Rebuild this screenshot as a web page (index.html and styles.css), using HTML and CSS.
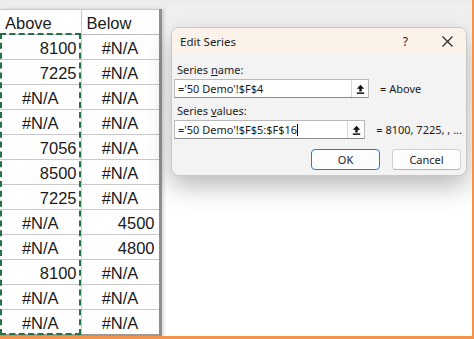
FILE: index.html
```html
<!DOCTYPE html>
<html lang="en">
<head>
  <meta charset="UTF-8" />
  <title>Edit Series</title>
  <link rel="stylesheet" href="styles.css">
</head>
<body>
  <div class="frame">
    <table class="sheet">
      <thead>
        <tr><th>Above</th><th>Below</th></tr>
      </thead>
      <tbody>
        <tr><td class="num">8100</td><td class="err">#N/A</td></tr>
        <tr><td class="num">7225</td><td class="err">#N/A</td></tr>
        <tr><td class="err">#N/A</td><td class="err">#N/A</td></tr>
        <tr><td class="err">#N/A</td><td class="err">#N/A</td></tr>
        <tr><td class="num">7056</td><td class="err">#N/A</td></tr>
        <tr><td class="num">8500</td><td class="err">#N/A</td></tr>
        <tr><td class="num">7225</td><td class="err">#N/A</td></tr>
        <tr><td class="err">#N/A</td><td class="num">4500</td></tr>
        <tr><td class="err">#N/A</td><td class="num">4800</td></tr>
        <tr><td class="num">8100</td><td class="err">#N/A</td></tr>
        <tr><td class="err">#N/A</td><td class="err">#N/A</td></tr>
        <tr><td class="err">#N/A</td><td class="err">#N/A</td></tr>
      </tbody>
    </table>
    <div class="selection"></div>

    <section class="dialog">
      <div class="title-bar">
        <span class="title">Edit Series</span>
        <span class="help">?</span>
        <span class="close">
          <svg width="11" height="11" viewBox="0 0 11 11"><path d="M0.5 0.5 L10.5 10.5 M10.5 0.5 L0.5 10.5" stroke="#222" stroke-width="1.1" fill="none"/></svg>
        </span>
      </div>
      <div class="dialog-body">
        <label class="field-label">Series <u>n</u>ame:</label>
        <div class="field-row">
          <div class="ref-box">
            <span class="ref-text">='50 Demo'!$F$4</span>
            <span class="ref-btn">
              <svg width="9" height="10" viewBox="0 0 9 10"><path d="M4.5 0.8 L8.2 4.8 H5.7 V7.4 H3.3 V4.8 H0.8 Z" fill="#111"/><rect x="0.8" y="8.4" width="7.4" height="1.5" fill="#111"/></svg>
            </span>
          </div>
          <span class="preview">= Above</span>
        </div>
        <label class="field-label second">Series <u>v</u>alues:</label>
        <div class="field-row">
          <div class="ref-box">
            <span class="ref-text">='50 Demo'!$F$5:$F$16<span class="caret"></span></span>
            <span class="ref-btn">
              <svg width="9" height="10" viewBox="0 0 9 10"><path d="M4.5 0.8 L8.2 4.8 H5.7 V7.4 H3.3 V4.8 H0.8 Z" fill="#111"/><rect x="0.8" y="8.4" width="7.4" height="1.5" fill="#111"/></svg>
            </span>
          </div>
          <span class="preview">= 8100, 7225, , ...</span>
        </div>
        <div class="buttons">
          <button class="btn default">OK</button>
          <button class="btn">Cancel</button>
        </div>
      </div>
    </section>
  </div>
</body>
</html>
```

FILE: styles.css
```css
body {
  margin: 0;
  padding: 0;
  background: #fff;
}

.frame {
  position: relative;
  width: 472px;
  height: 336px;
  border-right: 2px solid #f4914a;
  border-bottom: 3px solid #f4914a;
  background: linear-gradient(to bottom, #ececec 0px, #f6f6f6 40px, #fff 210px);
  overflow: hidden;
}

.sheet {
  margin-top: 9px;
  border-collapse: collapse;
  background: #fff;
  font-family: "Liberation Sans", Arial, sans-serif;
  font-size: 16.5px;
  color: #1a1a1a;
  border-top: 1px solid #9a9a9a;
  border-right: 3px solid #8f8f8f;
  border-bottom: 2px solid #9a9a9a;
  box-shadow: 2px 0 3px rgba(0, 0, 0, 0.15);
}

.sheet th,
.sheet td {
  box-sizing: border-box;
  border: 1px solid #c9c9c9;
  padding: 2px 4px 0;
  height: 25px;
  line-height: 22px;
}

.sheet th {
  height: 24px;
  padding-left: 5px;
  font-weight: normal;
  text-align: left;
  border-bottom-color: #bdbdbd;
}

.sheet th:first-child,
.sheet td:first-child {
  width: 81px;
  border-left: none;
}

.sheet th:last-child,
.sheet td:last-child {
  width: 79px;
}

.sheet .num {
  text-align: right;
}

.sheet .err {
  text-align: center;
}

.selection {
  position: absolute;
  left: 0;
  top: 33px;
  width: 77px;
  height: 298px;
  border: 2px dashed #217346;
}

.dialog {
  position: absolute;
  left: 171px;
  top: 27px;
  width: 294px;
  height: 147px;
  border: 1px solid #c8c8c8;
  border-radius: 8px;
  background: #f3f3f3;
  box-shadow: 0 10px 26px rgba(0, 0, 0, 0.28);
  overflow: hidden;
  font-family: "Noto Sans", "Open Sans", sans-serif;
  font-size: 11px;
  color: #1b1b1b;
}

.title-bar {
  height: 26px;
  display: flex;
  align-items: center;
  padding: 0 13px 0 8px;
  background: #fbf3ea;
}

.title {
  flex: 1;
  font-size: 11.5px;
}

.help {
  margin-right: 34px;
  font-size: 12px;
}

.close {
  display: flex;
}

.dialog-body {
  padding: 6px 4px 0 2px;
}

.field-label {
  display: block;
  height: 19px;
  line-height: 19px;
  padding-left: 3px;
}

.field-label.second {
  margin-top: 3px;
}

.field-row {
  display: flex;
  align-items: center;
  gap: 11px;
}

.ref-box {
  box-sizing: border-box;
  width: 195px;
  height: 19px;
  display: flex;
  align-items: center;
  background: #fff;
  border: 1px solid #b9b9b9;
  border-bottom-color: #8a8a8a;
}

.ref-text {
  flex: 1;
  padding-left: 3px;
  font-size: 11px;
  white-space: nowrap;
}

.caret {
  display: inline-block;
  width: 1px;
  height: 12px;
  background: #000;
  vertical-align: -2px;
}

.ref-btn {
  box-sizing: border-box;
  width: 17px;
  height: 17px;
  display: flex;
  align-items: center;
  justify-content: center;
  border-left: 1px solid #d6d6d6;
  background: #fdfdfd;
}

.preview {
  white-space: nowrap;
}

.buttons {
  display: flex;
  justify-content: flex-end;
  gap: 12px;
  margin-top: 10px;
  padding-right: 1px;
}

.btn {
  box-sizing: border-box;
  width: 69px;
  height: 21px;
  padding: 0;
  font-family: "Noto Sans", "Open Sans", sans-serif;
  font-size: 11px;
  color: #1b1b1b;
  background: #fdfdfd;
  border: 1px solid #d0d0d0;
  border-bottom-color: #b5b5b5;
  border-radius: 4px;
}

.btn.default {
  border: 1px solid #2a7ad0;
}
```
